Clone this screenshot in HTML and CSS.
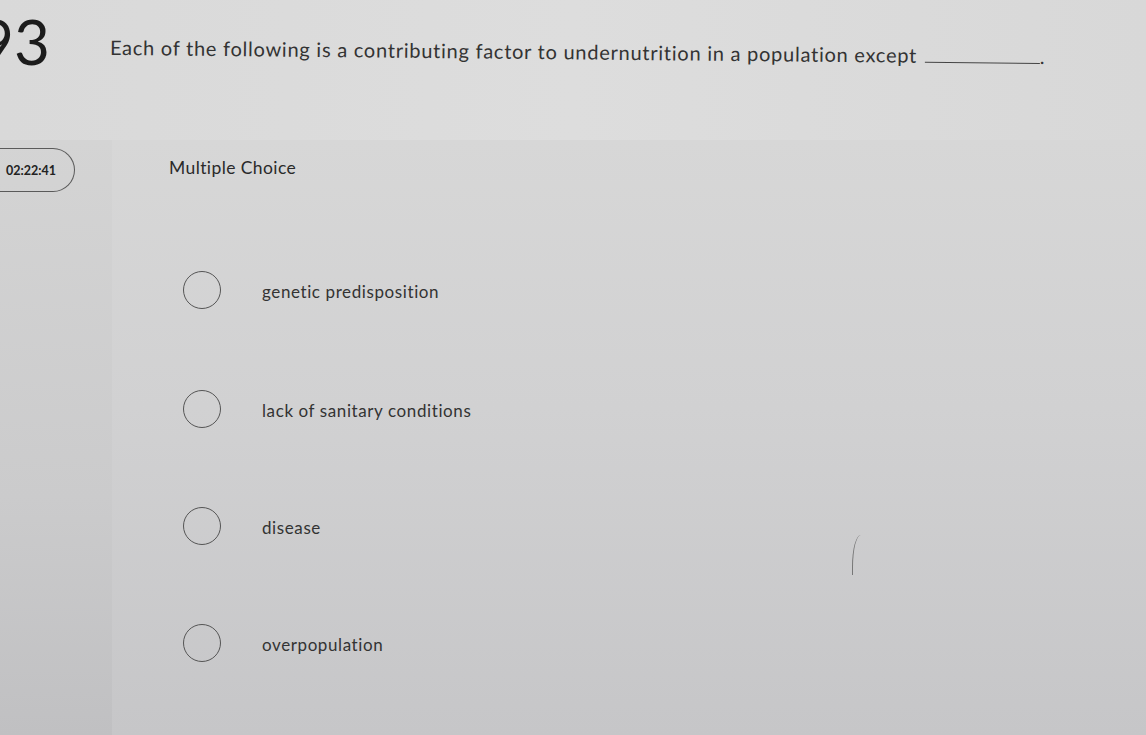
FILE: index.html
```html
<!DOCTYPE html>
<html lang="en">

<head>
    <meta charset="UTF-8">
    <meta name="viewport" content="width=device-width, initial-scale=1.0">
    <title>Question 93</title>
    <link rel="stylesheet" href="styles.css">
</head>

<body>
    <div id="page">
        <div class="question-header">
            <div class="question-number">93</div>
            <p class="question-text">Each of the following is a contributing factor to undernutrition in a population except <span class="blank"></span>.</p>
        </div>

        <div class="question-body">
            <div class="sidebar">
                <div class="timer">02:22:41</div>
            </div>

            <div class="panel">
                <div class="question-type">Multiple Choice</div>
                <ul class="choices">
                    <li class="choice"><span class="radio"></span><span class="choice-label">genetic predisposition</span></li>
                    <li class="choice"><span class="radio"></span><span class="choice-label">lack of sanitary conditions</span></li>
                    <li class="choice"><span class="radio"></span><span class="choice-label">disease</span></li>
                    <li class="choice"><span class="radio"></span><span class="choice-label">overpopulation</span></li>
                </ul>
                <span class="mark"></span>
            </div>
        </div>
    </div>
</body>

</html>
```

FILE: styles.css
```css
body {
    margin: 0;
    padding: 0;
    font-family: 'Lato', 'Open Sans', sans-serif;
    font-variant-ligatures: none;
    color: #2e2e2e;
    background: linear-gradient(180deg, #dbdbdb 0%, #d2d2d3 50%, #c4c4c6 100%);
    overflow: hidden;
}

#page {
    width: 1146px;
    height: 735px;
    display: flex;
    flex-direction: column;
}

.question-header {
    height: 140px;
    display: flex;
    align-items: flex-start;
    background: linear-gradient(90deg, #d9d9d9 0%, #dddddd 50%, #d8d8d8 100%);
}

.question-number {
    margin-left: -22px;
    margin-top: 10px;
    width: 132px;
    font-size: 62px;
    font-weight: 400;
    line-height: 62px;
    color: #1c1c1c;
}

.question-text {
    margin: 35px 0 0;
    font-size: 20px;
    letter-spacing: 0.75px;
    color: #333;
    transform: rotate(0.55deg);
    transform-origin: left center;
}

.blank {
    display: inline-block;
    width: 115px;
    border-bottom: 1px solid #444;
    margin-left: 2px;
}

.question-body {
    flex: 1;
    display: flex;
}

.sidebar {
    width: 112px;
    padding-top: 8px;
    background: linear-gradient(180deg, #d4d4d4 0%, #cbcbcc 60%, #c0c0c2 100%);
}

.timer {
    width: 75px;
    height: 44px;
    box-sizing: border-box;
    border: 1px solid #5a5a5a;
    border-left: none;
    border-radius: 0 22px 22px 0;
    display: flex;
    align-items: center;
    padding-left: 6px;
    font-size: 12.5px;
    font-weight: 700;
    color: #222;
}

.panel {
    flex: 1;
    position: relative;
    padding: 17px 0 0 57px;
    background: linear-gradient(180deg, #d7d7d7 0%, #d1d1d2 45%, #c6c6c8 100%);
}

.question-type {
    font-size: 17.5px;
    letter-spacing: 0.4px;
    color: #2a2a2a;
}

.choices {
    list-style: none;
    margin: 0;
    padding: 0;
}

.choice {
    display: flex;
    align-items: center;
    height: 117px;
    margin-left: 14px;
}

.choice:first-child {
    margin-top: 52px;
    height: 120px;
}

.radio {
    width: 38px;
    height: 38px;
    box-sizing: border-box;
    border: 1.5px solid #555;
    border-radius: 50%;
    margin-right: 41px;
}

.choice-label {
    font-size: 17px;
    letter-spacing: 0.6px;
    color: #333;
    padding-top: 3px;
}

.mark {
    position: absolute;
    left: 740px;
    top: 395px;
    width: 10px;
    height: 40px;
    border-left: 1.5px solid #777;
    border-radius: 80% 0 0 0;
}
```
